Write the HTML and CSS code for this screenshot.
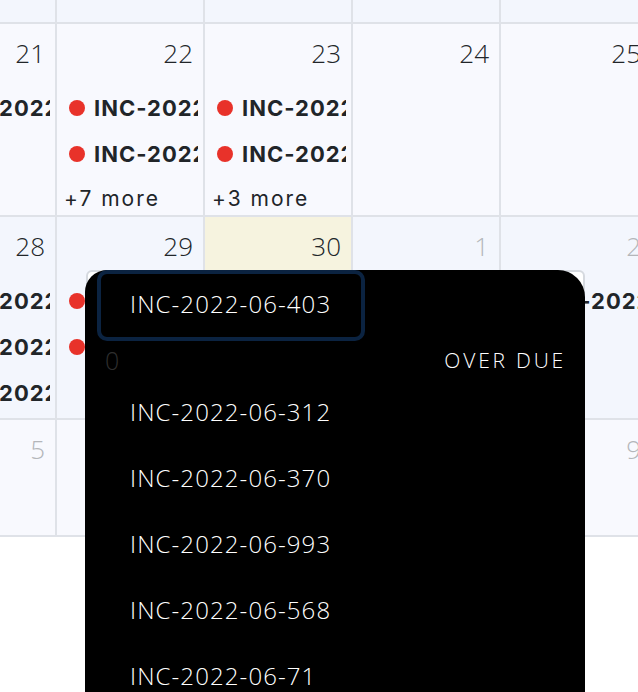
FILE: index.html
```html
<!DOCTYPE html>
<html lang="en">
<head>
<meta charset="utf-8">
<title>Calendar</title>
<link rel="stylesheet" href="styles.css">
</head>
<body>
<div class="calendar">
  <div class="cell alt"></div>
  <div class="cell alt"></div>
  <div class="cell alt"></div>
  <div class="cell alt"></div>
  <div class="cell alt"></div>

  <div class="cell">
    <div class="num">21</div>
    <div class="events">
      <div class="event"><span class="dot"></span><span class="label">INC-2022-06-118</span></div>
    </div>
  </div>
  <div class="cell">
    <div class="num">22</div>
    <div class="events">
      <div class="event"><span class="dot"></span><span class="label">INC-2022-06-204</span></div>
      <div class="event"><span class="dot"></span><span class="label">INC-2022-06-219</span></div>
    </div>
    <div class="more">+7 more</div>
  </div>
  <div class="cell">
    <div class="num">23</div>
    <div class="events">
      <div class="event"><span class="dot"></span><span class="label">INC-2022-06-301</span></div>
      <div class="event"><span class="dot"></span><span class="label">INC-2022-06-322</span></div>
    </div>
    <div class="more">+3 more</div>
  </div>
  <div class="cell"><div class="num">24</div></div>
  <div class="cell"><div class="num">25</div></div>

  <div class="cell alt">
    <div class="num">28</div>
    <div class="events">
      <div class="event"><span class="dot"></span><span class="label">INC-2022-06-403</span></div>
      <div class="event"><span class="dot"></span><span class="label">INC-2022-06-312</span></div>
      <div class="event"><span class="dot"></span><span class="label">INC-2022-06-370</span></div>
    </div>
  </div>
  <div class="cell alt">
    <div class="num">29</div>
    <div class="events">
      <div class="event"><span class="dot"></span><span class="label">INC-2022-06-993</span></div>
      <div class="event"><span class="dot"></span><span class="label">INC-2022-06-568</span></div>
    </div>
  </div>
  <div class="cell today"><div class="num">30</div></div>
  <div class="cell alt"><div class="num muted">1</div></div>
  <div class="cell alt">
    <div class="num muted">2</div>
    <div class="events">
      <div class="event"><span class="dot"></span><span class="label">INC-2022-06-71</span></div>
    </div>
  </div>

  <div class="cell"><div class="num muted">5</div></div>
  <div class="cell"><div class="num muted">6</div></div>
  <div class="cell"><div class="num muted">7</div></div>
  <div class="cell"><div class="num muted">8</div></div>
  <div class="cell"><div class="num muted">9</div></div>
</div>

<div class="select"></div>
<div class="listbox">
  <div class="option focused">INC-2022-06-403</div>
  <div class="meta"><span class="zero">0</span><span class="overdue">OVER DUE</span></div>
  <div class="option">INC-2022-06-312</div>
  <div class="option">INC-2022-06-370</div>
  <div class="option">INC-2022-06-993</div>
  <div class="option">INC-2022-06-568</div>
  <div class="option">INC-2022-06-71</div>
</div>
</body>
</html>
```
FILE: styles.css
```css
* { box-sizing: border-box; }
html, body { margin: 0; padding: 0; }
body {
  width: 638px;
  height: 692px;
  overflow: hidden;
  position: relative;
  background: #ffffff;
  font-family: Inter, "Noto Sans", sans-serif;
  color: #212529;
}
.calendar {
  display: grid;
  grid-template-columns: 146px 146px 146px 146px 150px;
  grid-template-rows: 22px 191px 201px 115px;
  gap: 2px;
  padding-bottom: 2px;
  background: #dfe2e8;
  margin-left: -91px;
  width: max-content;
}
.cell {
  background: #f8f9fe;
  padding-top: 13px;
  overflow: hidden;
  display: flex;
  flex-direction: column;
}
.cell > * { flex: none; }
.cell.alt { background: #f3f6fd; }
.cell.today { background: #f6f3df; }
.num {
  font-family: "Open Sans", Inter, sans-serif;
  font-size: 26px;
  line-height: 32px;
  font-weight: 300;
  text-align: right;
  padding-right: 10px;
  color: #212529;
}
.num.muted { color: #b4b6ba; }
.events {
  margin: 16px 5px 0 12px;
  overflow: hidden;
}
.event {
  height: 46px;
  display: flex;
  align-items: center;
  gap: 9px;
  white-space: nowrap;
  font-size: 22px;
  font-weight: 700;
  letter-spacing: 1px;
}
.dot {
  flex: none;
  width: 16px;
  height: 16px;
  border-radius: 50%;
  background: #e8322a;
}
.more {
  padding-left: 7px;
  line-height: 44px;
  font-size: 21px;
  font-weight: 400;
  letter-spacing: 2px;
  white-space: nowrap;
  color: #212529;
}
.select {
  position: absolute;
  left: 86px;
  top: 270px;
  width: 499px;
  height: 50px;
  border: 2px solid #d5d9df;
  border-radius: 6px;
  background: #ffffff;
}
.listbox {
  position: absolute;
  left: 85px;
  top: 270px;
  width: 500px;
  height: 440px;
  background: #000000;
  border-radius: 22px 27px 0 0;
  display: flex;
  flex-direction: column;
  color: #ffffff;
  font-family: "Open Sans", Inter, sans-serif;
  font-weight: 300;
}
.option {
  height: 66px;
  flex: none;
  padding-left: 45px;
  display: flex;
  align-items: center;
  font-size: 24px;
  letter-spacing: 1.1px;
  white-space: nowrap;
}
.option.focused {
  margin-left: 12px;
  width: 268px;
  height: 71px;
  border: 4px solid #0b2341;
  border-radius: 10px;
  padding-left: 29px;
  padding-bottom: 4px;
}
.meta {
  height: 37px;
  flex: none;
  display: flex;
  align-items: center;
  justify-content: space-between;
  padding: 0 19px 0 20px;
}
.zero {
  font-size: 25px;
  color: #2e2e2e;
}
.overdue {
  font-size: 21px;
  letter-spacing: 2.8px;
}
```
